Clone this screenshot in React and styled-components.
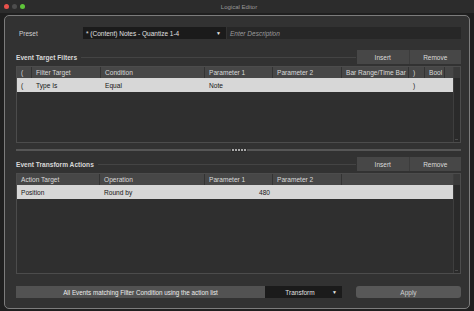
import React from "react";
import styled, { createGlobalStyle } from "styled-components";

const Global = createGlobalStyle`
  html, body { margin: 0; padding: 0; background: #1f1f1f; }
  body { font-family: "Liberation Sans", Arial, sans-serif; }
  * { box-sizing: border-box; }
`;

const Screen = styled.div`
  width: 474px;
  height: 311px;
  display: flex;
  flex-direction: column;
  background: #1f1f1f;
  overflow: hidden;
`;

const TitleBar = styled.div`
  height: 13px;
  flex: none;
  display: grid;
  grid-template-columns: 1fr auto 1fr;
  align-items: center;
  padding-left: 4px;
  background: #2c2c2c;
`;

const Lights = styled.div`
  display: flex;
  gap: 3px;
`;

const Light = styled.span`
  width: 5px;
  height: 5px;
  border-radius: 50%;
  background: ${(p) => p.$c};
`;

const WinTitle = styled.div`
  font-size: 6px;
  color: #9a9a9a;
`;

const Frame = styled.div`
  flex: 1;
  margin: 2px 4px 2px 4px;
  border: 1px solid #7c7c7c;
  border-radius: 5px;
  background: #323232;
  padding: 11px 8px 10px 11px;
  display: flex;
  flex-direction: column;
`;

const PresetRow = styled.div`
  height: 12px;
  display: flex;
  align-items: stretch;
  gap: 1px;
`;

const Label = styled.div`
  width: 66px;
  padding-left: 3px;
  font-size: 6.5px;
  color: #d0d0d0;
  display: flex;
  align-items: center;
`;

const Select = styled.div`
  width: ${(p) => p.$w}px;
  background: #1b1b1b;
  color: #e0e0e0;
  font-size: 6.5px;
  display: flex;
  align-items: center;
  padding: 0 5px 0 3px;
`;

const SelectText = styled.span`
  flex: 1;
  text-align: ${(p) => (p.$center ? "center" : "left")};
  white-space: nowrap;
`;

const Arrow = styled.span`
  font-size: 5px;
  color: #e8e8e8;
`;

const DescInput = styled.div`
  flex: 1;
  background: #272727;
  color: #9a9a9a;
  font-style: italic;
  font-size: 6.5px;
  display: flex;
  align-items: center;
  padding-left: 3px;
`;

const SectionHead = styled.div`
  height: 14px;
  margin-top: ${(p) => p.$mt}px;
  display: flex;
  align-items: center;
`;

const SectionTitle = styled.div`
  font-size: 6.6px;
  font-weight: bold;
  color: #d8d8d8;
  white-space: nowrap;
  padding-right: 4px;
`;

const Rule = styled.div`
  flex: 1;
  height: 1px;
  background: #444;
  margin-right: 1px;
`;

const BtnGroup = styled.div`
  width: 104px;
  height: 14px;
  display: flex;
  background: #474747;
`;

const GroupBtn = styled.div`
  flex: 1;
  display: flex;
  align-items: center;
  justify-content: center;
  font-size: 6.5px;
  color: #dcdcdc;
  & + & {
    border-left: 1px solid #3c3c3c;
  }
`;

const Table = styled.div`
  height: ${(p) => p.$h}px;
  margin-top: 2px;
  border: 1px solid #4c4c4c;
  background: #2f2f2f;
  display: flex;
`;

const TableBody = styled.div`
  flex: 1;
  display: flex;
  flex-direction: column;
`;

const HeadRow = styled.div`
  height: 11px;
  display: grid;
  grid-template-columns: ${(p) => p.$cols};
  background: #474747;
`;

const HeadCell = styled.div`
  font-size: 6.6px;
  color: #dadada;
  padding-left: 4px;
  display: flex;
  align-items: center;
  white-space: nowrap;
  overflow: hidden;
  border-right: 1px solid #333;
  &:last-child { border-right: none; }
`;

const DataRow = styled.div`
  height: 14px;
  display: grid;
  grid-template-columns: ${(p) => p.$cols};
  background: #d7d7d7;
`;

const Cell = styled.div`
  font-size: 6.6px;
  color: #151515;
  padding: 0 ${(p) => (p.$right ? "3px" : "0")} 0 4px;
  display: flex;
  align-items: center;
  justify-content: ${(p) => (p.$right ? "flex-end" : "flex-start")};
  white-space: nowrap;
  overflow: hidden;
`;

const Scroll = styled.div`
  width: 7px;
  background: #2a2a2a;
  border-left: 1px solid #3e3e3e;
  display: flex;
  flex-direction: column;
  justify-content: space-between;
`;

const ScrollCap = styled.div`
  height: 11px;
  background: #3a3a3a;
`;

const ScrollEnd = styled.div`
  height: 4px;
  margin: 0 2px 2px 1px;
  border-bottom: 1px solid #4a4a4a;
`;

const Splitter = styled.div`
  height: 14px;
  display: flex;
  align-items: center;
`;

const SplitLine = styled.div`
  flex: 1;
  height: 2px;
  background: #565656;
  display: flex;
  justify-content: center;
  align-items: center;
`;

const Dots = styled.div`
  display: flex;
  gap: 1px;
  padding: 0 1px;
  background: #2c2c2c;
  height: 3px;
  align-items: center;
`;

const Dot = styled.span`
  width: 2px;
  height: 2px;
  background: #a8a8a8;
`;

const BottomBar = styled.div`
  height: 12px;
  margin-top: 12px;
  display: flex;
`;

const InfoBox = styled.div`
  width: 249px;
  background: #525252;
  color: #ececec;
  font-size: 6.3px;
  display: flex;
  align-items: center;
  justify-content: center;
  white-space: nowrap;
`;

const Spacer = styled.div`
  width: 14px;
`;

const ApplyBtn = styled.div`
  flex: 1;
  background: #585858;
  border-radius: 3px;
  color: #cfcfcf;
  font-size: 6.5px;
  display: flex;
  align-items: center;
  justify-content: center;
`;

const cols1 = "15px 69px 104px 68px 69px 67px 16px 20px 1fr";
const cols2 = "83px 105px 68px 69px 1fr";

function Header({ cols, items }) {
  return (
    <HeadRow $cols={cols}>
      {items.map((t, i) => (
        <HeadCell key={i}>{t}</HeadCell>
      ))}
    </HeadRow>
  );
}

export default function App() {
  return (
    <>
      <Global />
      <Screen>
        <TitleBar>
          <Lights>
            <Light $c="#e8514b" />
            <Light $c="#4d4d4d" />
            <Light $c="#5fc43a" />
          </Lights>
          <WinTitle>Logical Editor</WinTitle>
          <span />
        </TitleBar>
        <Frame>
          <PresetRow>
            <Label>Preset</Label>
            <Select $w={143}>
              <SelectText>* (Content) Notes - Quantize 1-4</SelectText>
              <Arrow>▼</Arrow>
            </Select>
            <DescInput>Enter Description</DescInput>
          </PresetRow>

          <SectionHead $mt={11}>
            <SectionTitle>Event Target Filters</SectionTitle>
            <Rule />
            <BtnGroup>
              <GroupBtn>Insert</GroupBtn>
              <GroupBtn>Remove</GroupBtn>
            </BtnGroup>
          </SectionHead>
          <Table $h={77}>
            <TableBody>
              <Header
                cols={cols1}
                items={["(", "Filter Target", "Condition", "Parameter 1", "Parameter 2", "Bar Range/Time Bar", ")", "Bool", ""]}
              />
              <DataRow $cols={cols1}>
                <Cell>(</Cell>
                <Cell>Type Is</Cell>
                <Cell>Equal</Cell>
                <Cell>Note</Cell>
                <Cell />
                <Cell />
                <Cell>)</Cell>
                <Cell />
                <Cell />
              </DataRow>
            </TableBody>
            <Scroll>
              <ScrollCap />
              <ScrollEnd />
            </Scroll>
          </Table>

          <Splitter>
            <SplitLine>
              <Dots>
                <Dot />
                <Dot />
                <Dot />
                <Dot />
                <Dot />
              </Dots>
            </SplitLine>
          </Splitter>

          <SectionHead $mt={0}>
            <SectionTitle>Event Transform Actions</SectionTitle>
            <Rule />
            <BtnGroup>
              <GroupBtn>Insert</GroupBtn>
              <GroupBtn>Remove</GroupBtn>
            </BtnGroup>
          </SectionHead>
          <Table $h={101}>
            <TableBody>
              <Header cols={cols2} items={["Action Target", "Operation", "Parameter 1", "Parameter 2", ""]} />
              <DataRow $cols={cols2}>
                <Cell>Position</Cell>
                <Cell>Round by</Cell>
                <Cell $right>480</Cell>
                <Cell />
                <Cell />
              </DataRow>
            </TableBody>
            <Scroll>
              <ScrollCap />
              <ScrollEnd />
            </Scroll>
          </Table>

          <BottomBar>
            <InfoBox>All Events matching Filter Condition using the action list</InfoBox>
            <Select $w={77}>
              <SelectText $center>Transform</SelectText>
              <Arrow>▼</Arrow>
            </Select>
            <Spacer />
            <ApplyBtn>Apply</ApplyBtn>
          </BottomBar>
        </Frame>
      </Screen>
    </>
  );
}
